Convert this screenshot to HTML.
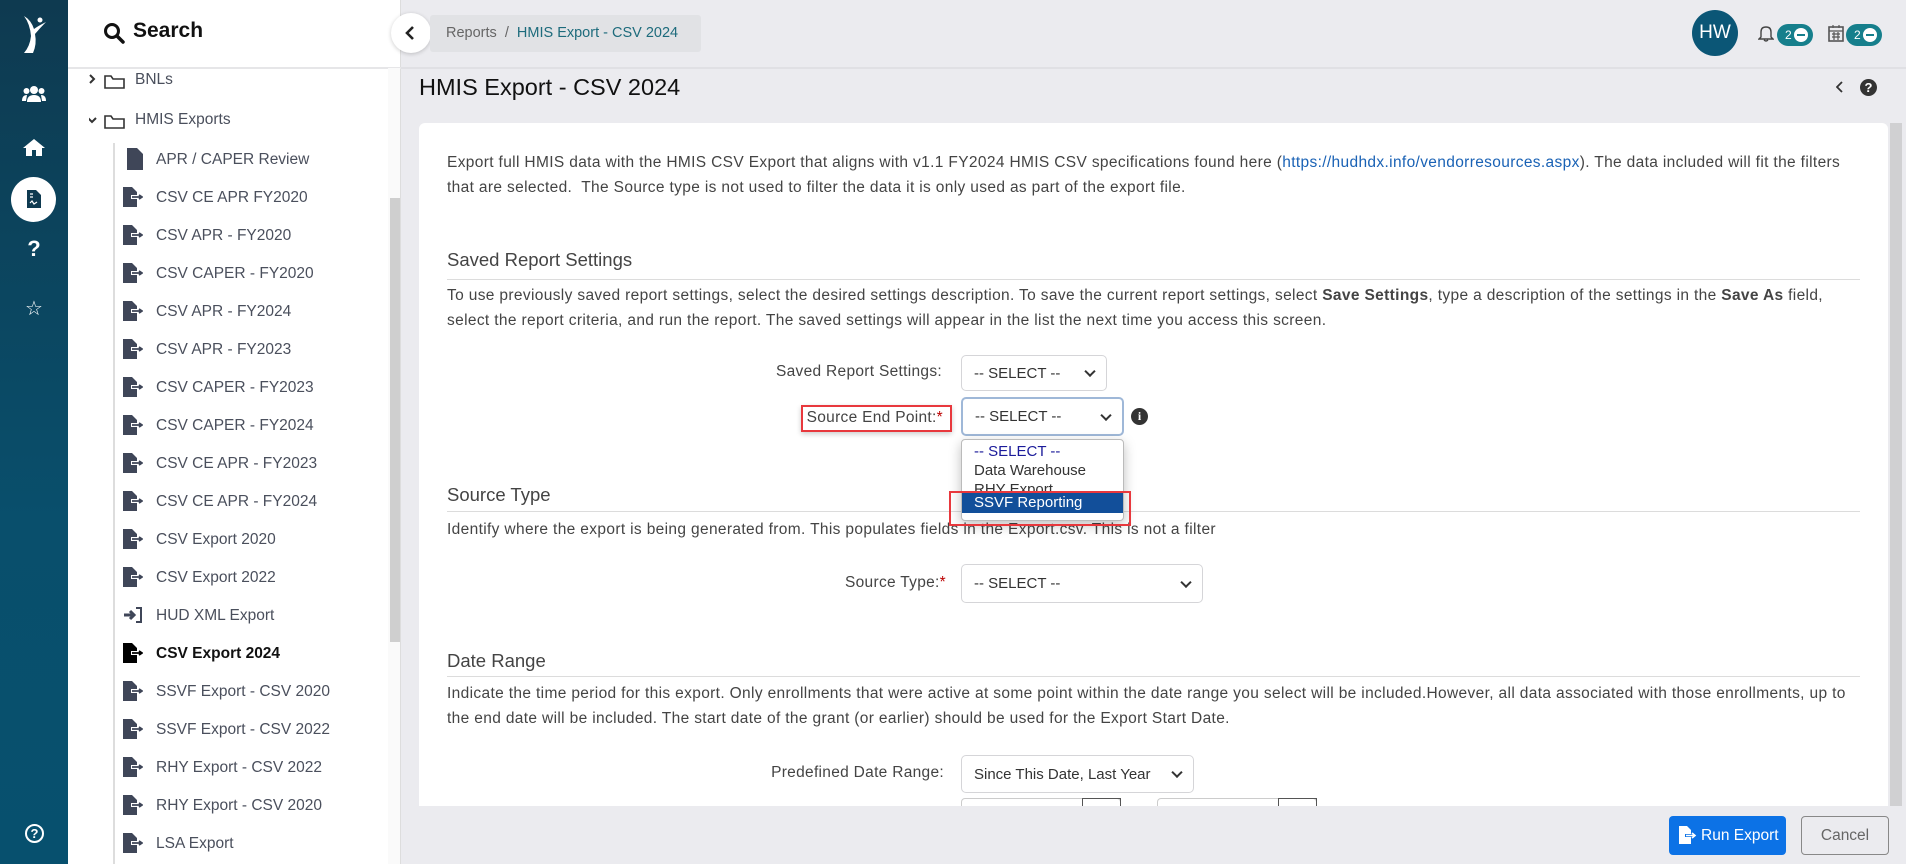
<!DOCTYPE html>
<html><head><meta charset="utf-8"><style>
*{box-sizing:border-box;margin:0;padding:0}
body{width:1906px;height:864px;overflow:hidden;font-family:"Liberation Sans",sans-serif;background:#ebebef;position:relative;color:#333}
.abs{position:absolute}
#nav{left:0;top:0;width:68px;height:864px;background:linear-gradient(#0e3a50,#094f6c 60%,#07506e)}
#panel{left:68px;top:0;width:333px;height:864px;background:#fff;border-right:1px solid #ddd}
.item{position:absolute;left:156px;font-size:15.5px;color:#4a4f5c;white-space:nowrap}
.ic{position:absolute;left:123px;width:20px;height:22px}
p.t{font-size:15.5px;line-height:25px;color:#444;letter-spacing:0.35px}
h3{font-weight:normal;font-size:18.5px;color:#444}
.sel{position:absolute;background:#fff;border:1px solid #d5d5d8;border-radius:5px;font-size:15px;color:#333;padding-left:12px;display:flex;align-items:center}
.sel:after{content:"";position:absolute;right:12px;top:50%;width:6px;height:6px;border-right:2px solid #333;border-bottom:2px solid #333;transform:translateY(-70%) rotate(45deg)}
.lbl{position:absolute;font-size:15.5px;color:#444;text-align:right;white-space:nowrap;letter-spacing:0.3px}
.hr{position:absolute;left:447px;width:1413px;height:1px;background:#dcdcdc}
</style></head><body>
<div id="nav" class="abs">
  <svg class="abs" style="left:20px;top:14px" width="28" height="40" viewBox="0 0 28 40"><path d="M4 2 Q10 10 11 22 Q10 32 4 39 L13 39 Q17 30 15 20 Q20 14 26 8 Q18 12 14 15 Q11 6 4 2Z" fill="#fff"/><circle cx="20" cy="6" r="2.5" fill="#fff"/></svg>
  <svg class="abs" style="left:22px;top:85px" width="24" height="18" viewBox="0 0 24 18" fill="#fff"><circle cx="12" cy="5" r="4"/><circle cx="4.5" cy="6" r="3"/><circle cx="19.5" cy="6" r="3"/><path d="M5 17 Q5 10 12 10 Q19 10 19 17Z"/><path d="M0 16 Q0 10 5 10 L4 16Z M24 16 Q24 10 19 10 L20 16Z"/></svg>
  <svg class="abs" style="left:23px;top:138px" width="22" height="18" viewBox="0 0 22 18" fill="#fff"><path d="M11 1 L22 10 L19 10 L19 18 L13 18 L13 12 L9 12 L9 18 L3 18 L3 10 L0 10Z"/></svg>
  <div class="abs" style="left:11px;top:177px;width:45px;height:45px;border-radius:50%;background:#fff"></div>
  <svg class="abs" style="left:27px;top:190px" width="14" height="18" viewBox="0 0 14 18"><path d="M0 0 H9 L14 5 V18 H0Z" fill="#0e3a50"/><path d="M3 4 H6 M3 7 H6 M3 13 L5 11 L7 14 L10 12" stroke="#fff" stroke-width="1.2" fill="none"/></svg>
  <div class="abs" style="left:0;width:68px;top:236px;text-align:center;color:#fff;font-weight:bold;font-size:22px">?</div>
  <div class="abs" style="left:0;width:68px;top:296px;text-align:center;color:#fff;font-size:20px">☆</div>
  <div class="abs" style="left:25px;top:824px;width:19px;height:19px;border:2px solid #fff;border-radius:50%;color:#fff;font-size:13px;font-weight:bold;text-align:center;line-height:15px">?</div>
</div>
<div id="panel" class="abs">
  <svg class="abs" style="left:35px;top:22px" width="22" height="22" viewBox="0 0 22 22"><circle cx="9" cy="9" r="6.5" stroke="#111" stroke-width="3" fill="none"/><path d="M14 14 L20 20" stroke="#111" stroke-width="3.5" stroke-linecap="round"/></svg>
  <div class="abs" style="left:65px;top:19px;font-size:21px;font-weight:bold;color:#111">Search</div>
  <div class="abs" style="left:0;top:67px;width:333px;height:2px;background:#e6e6e8"></div>
  <div class="abs" style="left:320px;top:68px;width:12px;height:796px;background:#fafafa"></div>
  <div class="abs" style="left:322px;top:198px;width:10px;height:444px;background:#cfcfcf"></div>
  <div class="abs" style="left:45px;top:143px;width:2px;height:721px;background:#ddd"></div>
</div>
<svg class="abs" style="left:89px;top:73px" width="40" height="60" viewBox="0 0 40 60" fill="none" stroke="#333" stroke-width="2"><path d="M1 2 L5 6 L1 10"/><path d="M16 3 H22 L24 6 H35 V15 H16Z" stroke-width="1.6"/><path d="M-1 45 L3 49 L7 45"/><path d="M16 43 H22 L24 46 H35 V55 H16Z" stroke-width="1.6"/></svg>
<div class="item" style="left:135px;top:71px">BNLs</div>
<div class="item" style="left:135px;top:111px">HMIS Exports</div>
<div class="abs" style="left:391px;top:13px;width:40px;height:40px;border-radius:50%;background:#fff;box-shadow:0 1px 4px rgba(0,0,0,.2)"></div>
<svg class="abs" style="left:404px;top:25px" width="12" height="16" viewBox="0 0 12 16"><path d="M9 2 L3 8 L9 14" stroke="#222" stroke-width="2.6" fill="none"/></svg>
<div class="abs" style="left:430px;top:15px;width:271px;height:37px;background:#e1e2e5;border-radius:3px;font-size:14.5px;line-height:37px;padding-left:16px;color:#666">Reports&nbsp; / &nbsp;<span style="color:#1d6b7c">HMIS Export - CSV 2024</span></div>
<div class="abs" style="left:401px;top:67px;width:1505px;height:2px;background:#e0e0e4"></div>
<div class="abs" style="left:1692px;top:10px;width:46px;height:46px;border-radius:50%;background:#0b5676;color:#fff;font-size:19px;text-align:center;line-height:46px">HW</div>
<svg class="abs" style="left:1758px;top:24px" width="16" height="18" viewBox="0 0 16 18"><path d="M3 13 V8 Q3 3 8 3 Q13 3 13 8 V13 L15 15 H1Z M6 16 Q8 18 10 16" stroke="#444" stroke-width="1.4" fill="none"/></svg>
<div class="abs" style="left:1777px;top:24px;width:36px;height:22px;border-radius:11px;background:#167f8c;color:#fff;font-size:12px;line-height:22px;padding-left:8px">2<span style="position:absolute;left:17px;top:4px;width:14px;height:14px;border-radius:50%;background:#fff"><span style="position:absolute;left:3px;top:6px;width:8px;height:2px;background:#167f8c"></span></span></div>
<svg class="abs" style="left:1828px;top:24px" width="16" height="18" viewBox="0 0 16 18"><rect x="1" y="3" width="14" height="14" stroke="#555" stroke-width="1.6" fill="none"/><path d="M1 7 H15 M5 1 V4 M11 1 V4 M4 10 H12 M4 13 H12 M6 8 V16 M10 8 V16" stroke="#555" stroke-width="1.2"/></svg>
<div class="abs" style="left:1846px;top:24px;width:36px;height:22px;border-radius:11px;background:#167f8c;color:#fff;font-size:12px;line-height:22px;padding-left:8px">2<span style="position:absolute;left:17px;top:4px;width:14px;height:14px;border-radius:50%;background:#fff"><span style="position:absolute;left:3px;top:6px;width:8px;height:2px;background:#167f8c"></span></span></div>
<div class="abs" style="left:419px;top:74px;font-size:23.5px;color:#111">HMIS Export - CSV 2024</div>
<svg class="abs" style="left:1836px;top:81px" width="8" height="12" viewBox="0 0 8 12"><path d="M6 1 L1 6 L6 11" stroke="#333" stroke-width="1.8" fill="none"/></svg>
<div class="abs" style="left:1860px;top:79px;width:17px;height:17px;border-radius:50%;background:#333;color:#fff;font-size:13px;font-weight:bold;text-align:center;line-height:17px">?</div>
<div class="abs" style="left:419px;top:123px;width:1469px;height:683px;background:#fff;border-radius:6px 6px 0 0"></div>
<div class="abs" style="left:1890px;top:123px;width:12px;height:683px;background:#d0d0d2"></div>
<div class="abs" style="left:447px;top:150px;width:1415px"><p class="t">Export full HMIS data with the HMIS CSV Export that aligns with v1.1 FY2024 HMIS CSV specifications found here (<span style="color:#1a62b5">https://hudhdx.info/vendorresources.aspx</span>). The data included will fit the filters<br>that are selected.&nbsp; The Source type is not used to filter the data it is only used as part of the export file.</p></div>
<h3 class="abs" style="left:447px;top:249px">Saved Report Settings</h3>
<div class="hr" style="top:279px"></div>
<div class="abs" style="left:447px;top:283px;width:1415px"><p class="t">To use previously saved report settings, select the desired settings description. To save the current report settings, select <b>Save Settings</b>, type a description of the settings in the <b>Save As</b> field,<br>select the report criteria, and run the report. The saved settings will appear in the list the next time you access this screen.</p></div>
<div class="lbl" style="right:964px;top:363px">Saved Report Settings:</div>
<div class="sel" style="left:961px;top:355px;width:146px;height:36px">-- SELECT --</div>
<div class="lbl" style="right:963px;top:409px">Source End Point:<span style="color:#b00">*</span></div>
<div class="abs" style="left:801px;top:405px;width:151px;height:27px;border:2px solid #e8383d;box-shadow:0 2px 5px rgba(0,0,0,.2)"></div>
<div class="sel" style="left:961px;top:397px;width:163px;height:39px;border:2px solid #9fb8d8">-- SELECT --</div>
<div class="abs" style="left:1131px;top:408px;width:17px;height:17px;border-radius:50%;background:#333;color:#fff;font-size:12px;font-weight:bold;text-align:center;line-height:17px;font-family:'Liberation Serif',serif">i</div>
<h3 class="abs" style="left:447px;top:484px">Source Type</h3>
<div class="hr" style="top:511px"></div>
<div class="abs" style="left:447px;top:517px"><p class="t">Identify where the export is being generated from. This populates fields in the Export.csv. This is not a filter</p></div>
<div class="lbl" style="right:960px;top:574px">Source Type:<span style="color:#b00">*</span></div>
<div class="sel" style="left:961px;top:564px;width:242px;height:39px">-- SELECT --</div>
<h3 class="abs" style="left:447px;top:650px">Date Range</h3>
<div class="hr" style="top:676px"></div>
<div class="abs" style="left:447px;top:681px;width:1415px"><p class="t">Indicate the time period for this export. Only enrollments that were active at some point within the date range you select will be included.However, all data associated with those enrollments, up to<br>the end date will be included. The start date of the grant (or earlier) should be used for the Export Start Date.</p></div>
<div class="lbl" style="right:962px;top:764px">Predefined Date Range:</div>
<div class="sel" style="left:961px;top:755px;width:233px;height:38px">Since This Date, Last Year</div>
<div class="abs" style="left:961px;top:798px;width:160px;height:8px;border:1px solid #ccc;border-bottom:none;border-radius:4px 4px 0 0"></div>
<div class="abs" style="left:1082px;top:798px;width:39px;height:8px;border:1px solid #555;border-bottom:none"></div>
<div class="abs" style="left:1157px;top:798px;width:160px;height:8px;border:1px solid #ccc;border-bottom:none;border-radius:4px 4px 0 0"></div>
<div class="abs" style="left:1278px;top:798px;width:39px;height:8px;border:1px solid #555;border-bottom:none"></div>
<div class="abs" style="left:961px;top:439px;width:163px;height:82px;background:#fff;border:1px solid #bbb;border-radius:4px;box-shadow:0 4px 12px rgba(0,0,0,.25);font-size:15px;line-height:19px;overflow:hidden">
  <div style="padding:2px 0 0 12px;color:#1b1b9a">-- SELECT --</div>
  <div style="padding-left:12px;color:#333">Data Warehouse</div>
  <div style="padding-left:12px;color:#333;height:12px;overflow:hidden">RHY Export</div>
  <div style="padding-left:12px;background:#124f9a;color:#fff;height:21px;line-height:21px">SSVF Reporting</div>
</div>
<div class="abs" style="left:949px;top:491px;width:182px;height:35px;border:2px solid #e8383d"></div>
<div class="abs" style="left:1669px;top:816px;width:117px;height:39px;background:#0c72e6;border-radius:4px;color:#fff;font-size:15.5px;line-height:39px;padding-left:32px">Run Export</div>
<svg class="abs" style="left:1679px;top:826px" width="18" height="18" viewBox="0 0 18 18"><path d="M0 0 H8 L12 4 V8 H6 V11 H12 V18 H0Z" fill="#fff"/><path d="M7 9.5 H15 M13 7 L16 9.5 L13 12" stroke="#fff" stroke-width="1.6" fill="none"/></svg>
<div class="abs" style="left:1801px;top:816px;width:88px;height:39px;border:1px solid #888;border-radius:4px;color:#666;font-size:15.5px;line-height:37px;text-align:center">Cancel</div>
<div style="position:absolute;left:0;top:0">
<svg class="ic" style="top:148px;left:127px" viewBox="0 0 20 22"><path d="M0 0 H10 L16 6 V22 H0Z" fill="#3f4658"/></svg><div class="item" style="top:151px">APR / CAPER Review</div>
<svg class="ic" style="top:186px" viewBox="0 0 20 22"><path d="M0 1 H9 L14 6 V9 H8 V13 H14 V21 H0Z" fill="#3f4658"/><path d="M9 11 H18 M16 9 L19 11 L16 13" stroke="#3f4658" stroke-width="1.8" fill="none"/></svg><div class="item" style="top:189px">CSV CE APR FY2020</div>
<svg class="ic" style="top:224px" viewBox="0 0 20 22"><path d="M0 1 H9 L14 6 V9 H8 V13 H14 V21 H0Z" fill="#3f4658"/><path d="M9 11 H18 M16 9 L19 11 L16 13" stroke="#3f4658" stroke-width="1.8" fill="none"/></svg><div class="item" style="top:227px">CSV APR - FY2020</div>
<svg class="ic" style="top:262px" viewBox="0 0 20 22"><path d="M0 1 H9 L14 6 V9 H8 V13 H14 V21 H0Z" fill="#3f4658"/><path d="M9 11 H18 M16 9 L19 11 L16 13" stroke="#3f4658" stroke-width="1.8" fill="none"/></svg><div class="item" style="top:265px">CSV CAPER - FY2020</div>
<svg class="ic" style="top:300px" viewBox="0 0 20 22"><path d="M0 1 H9 L14 6 V9 H8 V13 H14 V21 H0Z" fill="#3f4658"/><path d="M9 11 H18 M16 9 L19 11 L16 13" stroke="#3f4658" stroke-width="1.8" fill="none"/></svg><div class="item" style="top:303px">CSV APR - FY2024</div>
<svg class="ic" style="top:338px" viewBox="0 0 20 22"><path d="M0 1 H9 L14 6 V9 H8 V13 H14 V21 H0Z" fill="#3f4658"/><path d="M9 11 H18 M16 9 L19 11 L16 13" stroke="#3f4658" stroke-width="1.8" fill="none"/></svg><div class="item" style="top:341px">CSV APR - FY2023</div>
<svg class="ic" style="top:376px" viewBox="0 0 20 22"><path d="M0 1 H9 L14 6 V9 H8 V13 H14 V21 H0Z" fill="#3f4658"/><path d="M9 11 H18 M16 9 L19 11 L16 13" stroke="#3f4658" stroke-width="1.8" fill="none"/></svg><div class="item" style="top:379px">CSV CAPER - FY2023</div>
<svg class="ic" style="top:414px" viewBox="0 0 20 22"><path d="M0 1 H9 L14 6 V9 H8 V13 H14 V21 H0Z" fill="#3f4658"/><path d="M9 11 H18 M16 9 L19 11 L16 13" stroke="#3f4658" stroke-width="1.8" fill="none"/></svg><div class="item" style="top:417px">CSV CAPER - FY2024</div>
<svg class="ic" style="top:452px" viewBox="0 0 20 22"><path d="M0 1 H9 L14 6 V9 H8 V13 H14 V21 H0Z" fill="#3f4658"/><path d="M9 11 H18 M16 9 L19 11 L16 13" stroke="#3f4658" stroke-width="1.8" fill="none"/></svg><div class="item" style="top:455px">CSV CE APR - FY2023</div>
<svg class="ic" style="top:490px" viewBox="0 0 20 22"><path d="M0 1 H9 L14 6 V9 H8 V13 H14 V21 H0Z" fill="#3f4658"/><path d="M9 11 H18 M16 9 L19 11 L16 13" stroke="#3f4658" stroke-width="1.8" fill="none"/></svg><div class="item" style="top:493px">CSV CE APR - FY2024</div>
<svg class="ic" style="top:528px" viewBox="0 0 20 22"><path d="M0 1 H9 L14 6 V9 H8 V13 H14 V21 H0Z" fill="#3f4658"/><path d="M9 11 H18 M16 9 L19 11 L16 13" stroke="#3f4658" stroke-width="1.8" fill="none"/></svg><div class="item" style="top:531px">CSV Export 2020</div>
<svg class="ic" style="top:566px" viewBox="0 0 20 22"><path d="M0 1 H9 L14 6 V9 H8 V13 H14 V21 H0Z" fill="#3f4658"/><path d="M9 11 H18 M16 9 L19 11 L16 13" stroke="#3f4658" stroke-width="1.8" fill="none"/></svg><div class="item" style="top:569px">CSV Export 2022</div>
<svg class="ic" style="top:604px" viewBox="0 0 20 22"><path d="M1 11 H10 M7 7 L11 11 L7 15" stroke="#3f4658" stroke-width="3" fill="none"/><path d="M13 4 H18 V18 H13" stroke="#3f4658" stroke-width="2" fill="none"/></svg><div class="item" style="top:607px">HUD XML Export</div>
<svg class="ic" style="top:642px" viewBox="0 0 20 22"><path d="M0 1 H9 L14 6 V9 H8 V13 H14 V21 H0Z" fill="#000"/><path d="M9 11 H18 M16 9 L19 11 L16 13" stroke="#000" stroke-width="1.8" fill="none"/></svg><div class="item" style="top:645px;color:#111;font-weight:bold">CSV Export 2024</div>
<svg class="ic" style="top:680px" viewBox="0 0 20 22"><path d="M0 1 H9 L14 6 V9 H8 V13 H14 V21 H0Z" fill="#3f4658"/><path d="M9 11 H18 M16 9 L19 11 L16 13" stroke="#3f4658" stroke-width="1.8" fill="none"/></svg><div class="item" style="top:683px">SSVF Export - CSV 2020</div>
<svg class="ic" style="top:718px" viewBox="0 0 20 22"><path d="M0 1 H9 L14 6 V9 H8 V13 H14 V21 H0Z" fill="#3f4658"/><path d="M9 11 H18 M16 9 L19 11 L16 13" stroke="#3f4658" stroke-width="1.8" fill="none"/></svg><div class="item" style="top:721px">SSVF Export - CSV 2022</div>
<svg class="ic" style="top:756px" viewBox="0 0 20 22"><path d="M0 1 H9 L14 6 V9 H8 V13 H14 V21 H0Z" fill="#3f4658"/><path d="M9 11 H18 M16 9 L19 11 L16 13" stroke="#3f4658" stroke-width="1.8" fill="none"/></svg><div class="item" style="top:759px">RHY Export - CSV 2022</div>
<svg class="ic" style="top:794px" viewBox="0 0 20 22"><path d="M0 1 H9 L14 6 V9 H8 V13 H14 V21 H0Z" fill="#3f4658"/><path d="M9 11 H18 M16 9 L19 11 L16 13" stroke="#3f4658" stroke-width="1.8" fill="none"/></svg><div class="item" style="top:797px">RHY Export - CSV 2020</div>
<svg class="ic" style="top:832px" viewBox="0 0 20 22"><path d="M0 1 H9 L14 6 V9 H8 V13 H14 V21 H0Z" fill="#3f4658"/><path d="M9 11 H18 M16 9 L19 11 L16 13" stroke="#3f4658" stroke-width="1.8" fill="none"/></svg><div class="item" style="top:835px">LSA Export</div>
</div>
</body></html>
